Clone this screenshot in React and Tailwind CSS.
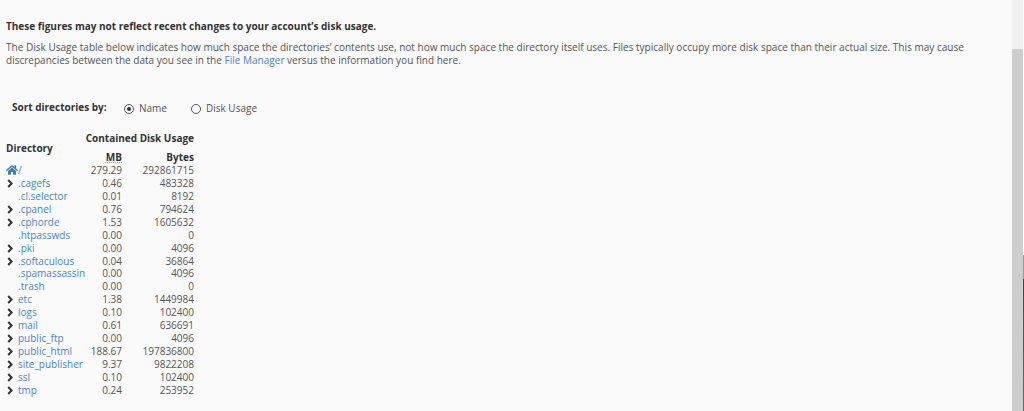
import { FaHome } from "react-icons/fa";

const rows = [
  [".cagefs", "0.46", "483328", 1],
  [".cl.selector", "0.01", "8192", 0],
  [".cpanel", "0.76", "794624", 1],
  [".cphorde", "1.53", "1605632", 1],
  [".htpasswds", "0.00", "0", 0],
  [".pki", "0.00", "4096", 1],
  [".softaculous", "0.04", "36864", 1],
  [".spamassassin", "0.00", "4096", 0],
  [".trash", "0.00", "0", 0],
  ["etc", "1.38", "1449984", 1],
  ["logs", "0.10", "102400", 1],
  ["mail", "0.61", "636691", 1],
  ["public_ftp", "0.00", "4096", 1],
  ["public_html", "188.67", "197836800", 1],
  ["site_publisher", "9.37", "9822208", 1],
  ["ssl", "0.10", "102400", 1],
  ["tmp", "0.24", "253952", 1],
];

function Chevron() {
  return (
    <svg width="6" height="9" viewBox="0 0 6 9" className="ml-[1px] shrink-0">
      <path d="M1.2 1 L4.6 4.5 L1.2 8" fill="none" stroke="#333" strokeWidth="2" />
    </svg>
  );
}

function Row({ name, mb, bytes, arrow }) {
  return (
    <div className="flex h-[12.94px] items-center">
      <div className="flex w-[82px] items-center whitespace-nowrap">
        <div className="w-[12px] shrink-0">{arrow ? <Chevron /> : null}</div>
        <span className="text-[#4a86c0]">{name}</span>
      </div>
      <div className="w-[34px] text-right">{mb}</div>
      <div className="w-[72px] text-right">{bytes}</div>
    </div>
  );
}

export default function App() {
  return (
    <div className="h-[411px] w-[1024px] overflow-hidden bg-[#fafafa] flex font-['Open_Sans',sans-serif] text-[10px] leading-[13px] text-[#555]">
      <div className="w-[1012px] pl-[6px] pt-[20px]">
        <p className="font-bold text-[#333]">These figures may not reflect recent changes to your account’s disk usage.</p>
        <p className="mt-[8px] w-[1000px] text-[10.04px]">
          The Disk Usage table below indicates how much space the directories’ contents use, not how much space the directory itself uses. Files typically occupy more disk space than their actual size. This may cause discrepancies between the data you see in the <span className="text-[#4a86c0]">File Manager</span> versus the information you find here.
        </p>
        <div className="mt-[35px] flex items-center pl-[6px]">
          <span className="w-[112px] font-bold -mt-[2px] text-[#333]">Sort directories by:</span>
          <span className="flex items-center gap-[5px]">
            <span className="flex h-[10px] w-[10px] items-center justify-center rounded-full border border-[#555]">
              <span className="h-[4px] w-[4px] rounded-full bg-[#333]" />
            </span>
            Name
          </span>
          <span className="ml-[24px] flex items-center gap-[5px]">
            <span className="h-[10px] w-[10px] rounded-full border border-[#555]" />
            Disk Usage
          </span>
        </div>
        <div className="mt-[17px] w-[188px]">
          <div className="flex">
            <div className="flex w-[82px] items-center font-bold text-[#333]">Directory</div>
            <div className="w-[106px] font-bold text-[#333]">
              <div className="-ml-[4px] pb-[6px] text-right whitespace-nowrap">Contained Disk Usage</div>
              <div className="flex">
                <div className="w-[34px] text-right underline decoration-dotted decoration-[#999]">MB</div>
                <div className="w-[72px] text-right">Bytes</div>
              </div>
            </div>
          </div>
          <div className="flex h-[12.94px] items-center">
            <div className="flex w-[82px] items-center">
              <FaHome className="h-[12px] w-[12px] text-[#3b7cb8]" />
              <span className="text-[#4a86c0]">/</span>
            </div>
            <div className="w-[34px] text-right">279.29</div>
            <div className="w-[72px] text-right">292861715</div>
          </div>
          {rows.map(([name, mb, bytes, arrow]) => (
            <Row key={name} name={name} mb={mb} bytes={bytes} arrow={arrow} />
          ))}
        </div>
      </div>
      <div className="w-[11px] flex flex-col bg-[#f1f1f1]">
        <div className="h-[49px]" />
        <div className="flex-1 bg-[#cdcdcd]" />
      </div>
      <div className="w-[1px] flex flex-col bg-[#fafafa]">
        <div className="h-[255px]" />
        <div className="h-[24px] bg-[#9a9a9a]" />
        <div className="flex-1 bg-gradient-to-b from-[#4a4038] to-[#a5562f]" />
      </div>
    </div>
  );
}
